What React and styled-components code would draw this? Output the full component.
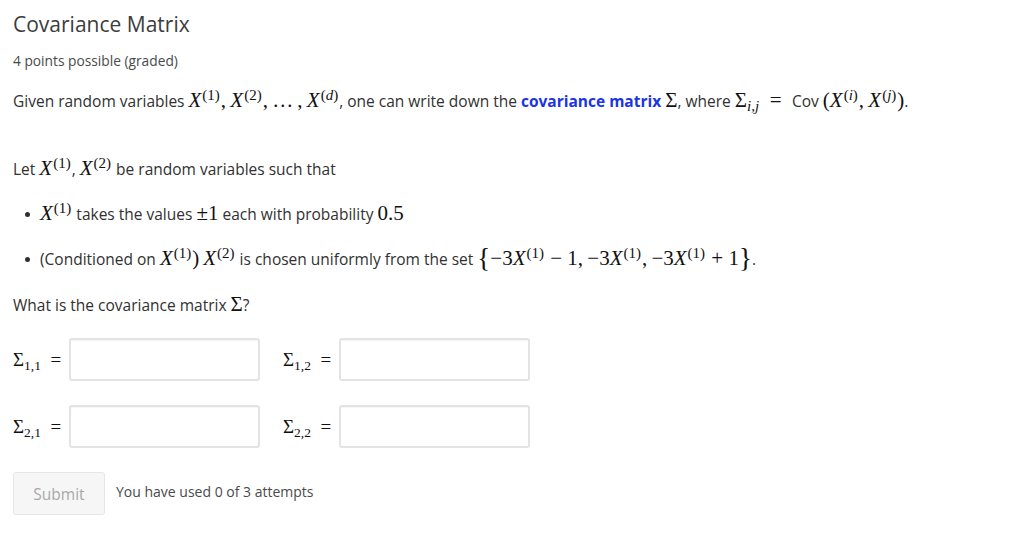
import styled, { createGlobalStyle } from "styled-components";

const GlobalStyle = createGlobalStyle`
  body {
    margin: 0;
    background: #fff;
    font-family: "Open Sans", "Liberation Sans", sans-serif;
    color: #313131;
  }
`;

const Page = styled.div`
  padding: 12px 13px 30px;
  display: flex;
  flex-direction: column;
`;

const Title = styled.h2`
  margin: 0;
  font-size: 21px;
  line-height: 24px;
  font-weight: 400;
  color: #3c3c3c;
`;

const Points = styled.div`
  margin-top: 16px;
  font-size: 13.75px;
  line-height: 18px;
  color: #4a4a4a;
`;

const Para = styled.p`
  margin: ${({ $top }) => $top}px 0 0;
  height: 24px;
  font-size: 15.5px;
  line-height: 24px;
  white-space: nowrap;
`;

const Link = styled.strong`
  color: #1a34e6;
  font-weight: 700;
`;

const List = styled.ul`
  margin: 21px 0 0;
  padding: 0;
  list-style: none;
  display: flex;
  flex-direction: column;
  gap: 21px;
`;

const Item = styled.li`
  height: 24px;
  font-size: 15.5px;
  line-height: 24px;
  padding-left: 12px;
  white-space: nowrap;
  &::before {
    content: "";
    display: inline-block;
    width: 5px;
    height: 5px;
    border-radius: 50%;
    background: #313131;
    margin-right: 10px;
    vertical-align: 3px;
  }
`;

const M = styled.span`
  font-family: "Liberation Serif", "DejaVu Serif", serif;
  font-size: 21px;
  line-height: 0;
  font-style: ${({ $it }) => ($it ? "italic" : "normal")};
  color: #111;
  white-space: pre;
`;

const Sup = styled.sup`
  font-family: "Liberation Serif", serif;
  font-style: normal;
  font-size: 15px;
  vertical-align: 7px;
  line-height: 0;
  margin-left: 1px;
  margin-right: 1px;
`;

const Sub = styled.sub`
  font-family: "Liberation Serif", serif;
  font-style: ${({ $it }) => ($it ? "italic" : "normal")};
  font-size: ${({ $small }) => ($small ? 13.5 : 15)}px;
  vertical-align: -4px;
  line-height: 0;
`;

const Brace = styled.span`
  font-family: "Liberation Serif", serif;
  font-size: 27px;
  line-height: 0;
  vertical-align: -2px;
  color: #111;
`;

const Grid = styled.div`
  margin-top: 21px;
  display: grid;
  grid-template-columns: 247px 247px;
  column-gap: 23px;
  row-gap: 24px;
  width: max-content;
`;

const Field = styled.label`
  display: flex;
  align-items: center;
  height: 43px;
`;

const FieldLabel = styled.span`
  width: 56px;
  flex: none;
  font-family: "Liberation Serif", serif;
  font-size: 19px;
  color: #111;
  white-space: nowrap;
`;

const Box = styled.input`
  box-sizing: border-box;
  width: 191px;
  height: 43px;
  margin: 0;
  border: 2px solid #e3e3e3;
  border-radius: 3px;
  background: #fff;
  box-shadow: inset 0 1px 1px rgba(0, 0, 0, 0.04);
  outline: none;
`;

const Actions = styled.div`
  margin-top: 24px;
  display: flex;
  align-items: center;
  gap: 11px;
`;

const SubmitButton = styled.button`
  box-sizing: border-box;
  width: 92px;
  height: 43px;
  margin: 0;
  border: 1px solid #e6e6e6;
  border-radius: 3px;
  background: #f6f6f6;
  color: #a8a8a8;
  font-family: inherit;
  font-size: 15.5px;
  padding-top: 2px;
`;

const Attempts = styled.span`
  font-size: 14px;
  color: #4a4a4a;
  margin-top: -4px;
`;

const X = ({ s }) => (
  <M $it>
    X<Sup>({s})</Sup>
  </M>
);

const XI = ({ s }) => (
  <M $it>
    X
    <Sup>
      (<i>{s}</i>)
    </Sup>
  </M>
);

const SigmaField = ({ sub }) => (
  <Field>
    <FieldLabel>
      Σ<Sub $small>{sub}</Sub>&nbsp;&nbsp;=
    </FieldLabel>
    <Box type="text" />
  </Field>
);

const thin = "\u2009";

export default function App() {
  return (
    <>
      <GlobalStyle />
      <Page>
        <Title>Covariance Matrix</Title>
        <Points>4 points possible (graded)</Points>
        <Para $top={19}>
          Given random variables <X s="1" />
          <M>,{thin}</M>
          <X s="2" />
          <M>,{thin}…{thin},{thin}</M>
          <XI s="d" />, one can write down the <Link>covariance matrix</Link>{" "}
          <M>Σ</M>, where{" "}
          <M>
            Σ<Sub $it>i,j</Sub>
            {"\u2002"}={"\u2002"}
          </M>
          Cov <M>(</M>
          <XI s="i" />
          <M>,{thin}</M>
          <XI s="j" />
          <M>)</M>.
        </Para>
        <Para $top={44}>
          Let <X s="1" />, <X s="2" /> be random variables such that
        </Para>
        <List>
          <Item>
            <X s="1" /> takes the values <M>±1</M> each with probability <M>0.5</M>
          </Item>
          <Item>
            (Conditioned on <X s="1" />
            <M>)</M> <X s="2" /> is chosen uniformly from the set{" "}
            <Brace>{"{"}</Brace>
            <M>
              −3<i>X</i>
              <Sup>(1)</Sup> − 1,{thin}−3<i>X</i>
              <Sup>(1)</Sup>,{thin}−3<i>X</i>
              <Sup>(1)</Sup> + 1
            </M>
            <Brace>{"}"}</Brace>.
          </Item>
        </List>
        <Para $top={22}>
          What is the covariance matrix <M>Σ</M>?
        </Para>
        <Grid>
          <SigmaField sub="1,1" />
          <SigmaField sub="1,2" />
          <SigmaField sub="2,1" />
          <SigmaField sub="2,2" />
        </Grid>
        <Actions>
          <SubmitButton type="button">Submit</SubmitButton>
          <Attempts>You have used 0 of 3 attempts</Attempts>
        </Actions>
      </Page>
    </>
  );
}
